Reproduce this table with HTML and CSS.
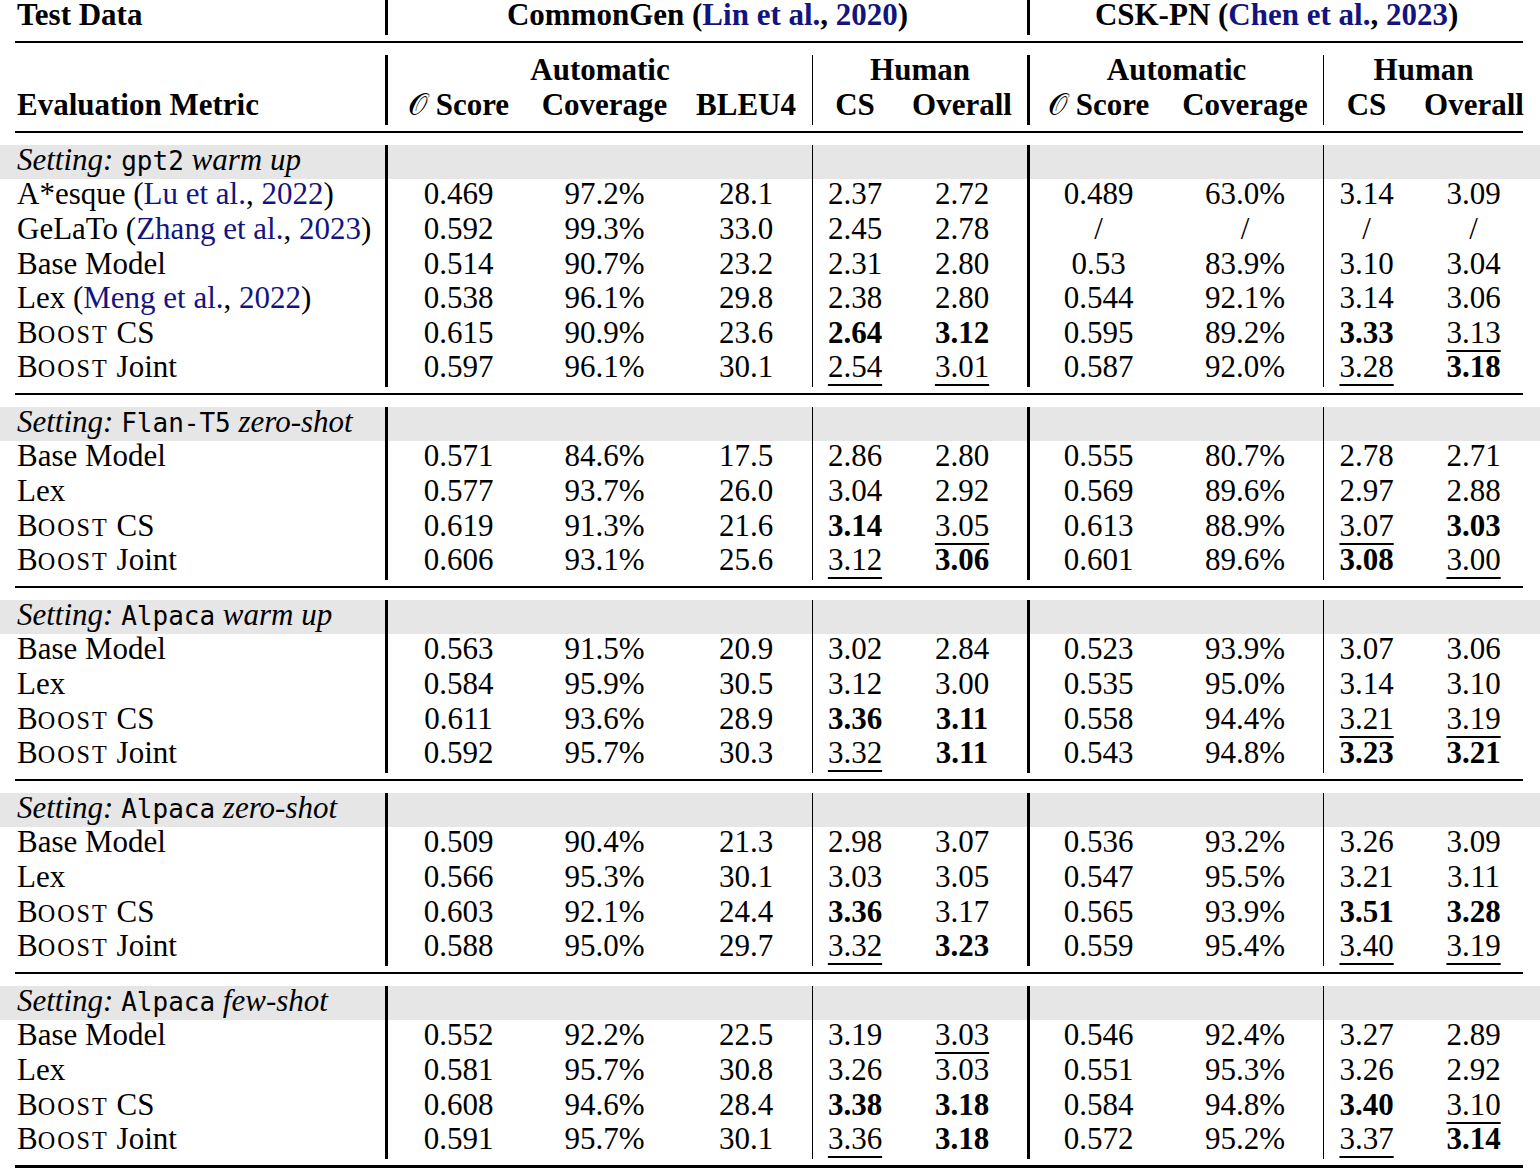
FILE: index.html
```html
<!DOCTYPE html>
<html lang="en">
<head>
<meta charset="utf-8">
<title>Results table</title>
<link rel="stylesheet" href="styles.css">
</head>
<body>
<div class="page">
<table class="results">
  <colgroup>
    <col class="c1"><col class="c2"><col class="c3"><col class="c4"><col class="c5">
    <col class="c6"><col class="c7"><col class="c8"><col class="c9"><col class="c10">
  </colgroup>
  <thead>
    <tr>
      <th class="name">Test Data</th>
      <th class="tk" colspan="5">CommonGen (<span class="cite">Lin et al.</span>, <span class="cite">2020</span>)</th>
      <th class="tk" colspan="4">CSK-PN (<span class="cite">Chen et al.</span>, <span class="cite">2023</span>)</th>
    </tr>
    <tr class="rule"><td colspan="10"><div class="line"></div></td></tr>
    <tr>
      <th class="name"></th>
      <th class="tk" colspan="3">Automatic</th>
      <th class="tn" colspan="2">Human</th>
      <th class="tk" colspan="2">Automatic</th>
      <th class="tn" colspan="2">Human</th>
    </tr>
    <tr>
      <th class="name">Evaluation Metric</th>
      <th class="tk"><span class="cal">𝒪</span> Score</th>
      <th>Coverage</th>
      <th>BLEU4</th>
      <th class="tn">CS</th>
      <th>Overall</th>
      <th class="tk"><span class="cal">𝒪</span> Score</th>
      <th>Coverage</th>
      <th class="tn">CS</th>
      <th class="last">Overall</th>
    </tr>
    <tr class="rule"><td colspan="10"><div class="line"></div></td></tr>
  </thead>
  <tbody>
    <tr class="setting"><td class="name"><i>Setting:</i> <code>gpt2</code> <i>warm up</i></td><td class="tk"></td><td></td><td></td><td class="tn"></td><td></td><td class="tk"></td><td></td><td class="tn"></td><td class="last"></td></tr>
    <tr><td class="name">A*esque (<span class="cite">Lu et al.</span>, <span class="cite">2022</span>)</td><td class="tk">0.469</td><td>97.2%</td><td>28.1</td><td class="tn">2.37</td><td>2.72</td><td class="tk">0.489</td><td>63.0%</td><td class="tn">3.14</td><td class="last">3.09</td></tr>
    <tr><td class="name">GeLaTo (<span class="cite">Zhang et al.</span>, <span class="cite">2023</span>)</td><td class="tk">0.592</td><td>99.3%</td><td>33.0</td><td class="tn">2.45</td><td>2.78</td><td class="tk">/</td><td>/</td><td class="tn">/</td><td class="last">/</td></tr>
    <tr><td class="name">Base Model</td><td class="tk">0.514</td><td>90.7%</td><td>23.2</td><td class="tn">2.31</td><td>2.80</td><td class="tk">0.53</td><td>83.9%</td><td class="tn">3.10</td><td class="last">3.04</td></tr>
    <tr><td class="name">Lex (<span class="cite">Meng et al.</span>, <span class="cite">2022</span>)</td><td class="tk">0.538</td><td>96.1%</td><td>29.8</td><td class="tn">2.38</td><td>2.80</td><td class="tk">0.544</td><td>92.1%</td><td class="tn">3.14</td><td class="last">3.06</td></tr>
    <tr><td class="name">B<span class="sc">oost</span> CS</td><td class="tk">0.615</td><td>90.9%</td><td>23.6</td><td class="tn"><b>2.64</b></td><td><b>3.12</b></td><td class="tk">0.595</td><td>89.2%</td><td class="tn"><b>3.33</b></td><td class="last"><span class="second">3.13</span></td></tr>
    <tr><td class="name">B<span class="sc">oost</span> Joint</td><td class="tk">0.597</td><td>96.1%</td><td>30.1</td><td class="tn"><span class="second">2.54</span></td><td><span class="second">3.01</span></td><td class="tk">0.587</td><td>92.0%</td><td class="tn"><span class="second">3.28</span></td><td class="last"><b>3.18</b></td></tr>
    <tr class="rule"><td colspan="10"><div class="line"></div></td></tr>

    <tr class="setting"><td class="name"><i>Setting:</i> <code>Flan-T5</code> <i>zero-shot</i></td><td class="tk"></td><td></td><td></td><td class="tn"></td><td></td><td class="tk"></td><td></td><td class="tn"></td><td class="last"></td></tr>
    <tr><td class="name">Base Model</td><td class="tk">0.571</td><td>84.6%</td><td>17.5</td><td class="tn">2.86</td><td>2.80</td><td class="tk">0.555</td><td>80.7%</td><td class="tn">2.78</td><td class="last">2.71</td></tr>
    <tr><td class="name">Lex</td><td class="tk">0.577</td><td>93.7%</td><td>26.0</td><td class="tn">3.04</td><td>2.92</td><td class="tk">0.569</td><td>89.6%</td><td class="tn">2.97</td><td class="last">2.88</td></tr>
    <tr><td class="name">B<span class="sc">oost</span> CS</td><td class="tk">0.619</td><td>91.3%</td><td>21.6</td><td class="tn"><b>3.14</b></td><td><span class="second">3.05</span></td><td class="tk">0.613</td><td>88.9%</td><td class="tn"><span class="second">3.07</span></td><td class="last"><b>3.03</b></td></tr>
    <tr><td class="name">B<span class="sc">oost</span> Joint</td><td class="tk">0.606</td><td>93.1%</td><td>25.6</td><td class="tn"><span class="second">3.12</span></td><td><b>3.06</b></td><td class="tk">0.601</td><td>89.6%</td><td class="tn"><b>3.08</b></td><td class="last"><span class="second">3.00</span></td></tr>
    <tr class="rule"><td colspan="10"><div class="line"></div></td></tr>

    <tr class="setting"><td class="name"><i>Setting:</i> <code>Alpaca</code> <i>warm up</i></td><td class="tk"></td><td></td><td></td><td class="tn"></td><td></td><td class="tk"></td><td></td><td class="tn"></td><td class="last"></td></tr>
    <tr><td class="name">Base Model</td><td class="tk">0.563</td><td>91.5%</td><td>20.9</td><td class="tn">3.02</td><td>2.84</td><td class="tk">0.523</td><td>93.9%</td><td class="tn">3.07</td><td class="last">3.06</td></tr>
    <tr><td class="name">Lex</td><td class="tk">0.584</td><td>95.9%</td><td>30.5</td><td class="tn">3.12</td><td>3.00</td><td class="tk">0.535</td><td>95.0%</td><td class="tn">3.14</td><td class="last">3.10</td></tr>
    <tr><td class="name">B<span class="sc">oost</span> CS</td><td class="tk">0.611</td><td>93.6%</td><td>28.9</td><td class="tn"><b>3.36</b></td><td><b>3.11</b></td><td class="tk">0.558</td><td>94.4%</td><td class="tn"><span class="second">3.21</span></td><td class="last"><span class="second">3.19</span></td></tr>
    <tr><td class="name">B<span class="sc">oost</span> Joint</td><td class="tk">0.592</td><td>95.7%</td><td>30.3</td><td class="tn"><span class="second">3.32</span></td><td><b>3.11</b></td><td class="tk">0.543</td><td>94.8%</td><td class="tn"><b>3.23</b></td><td class="last"><b>3.21</b></td></tr>
    <tr class="rule"><td colspan="10"><div class="line"></div></td></tr>

    <tr class="setting"><td class="name"><i>Setting:</i> <code>Alpaca</code> <i>zero-shot</i></td><td class="tk"></td><td></td><td></td><td class="tn"></td><td></td><td class="tk"></td><td></td><td class="tn"></td><td class="last"></td></tr>
    <tr><td class="name">Base Model</td><td class="tk">0.509</td><td>90.4%</td><td>21.3</td><td class="tn">2.98</td><td>3.07</td><td class="tk">0.536</td><td>93.2%</td><td class="tn">3.26</td><td class="last">3.09</td></tr>
    <tr><td class="name">Lex</td><td class="tk">0.566</td><td>95.3%</td><td>30.1</td><td class="tn">3.03</td><td>3.05</td><td class="tk">0.547</td><td>95.5%</td><td class="tn">3.21</td><td class="last">3.11</td></tr>
    <tr><td class="name">B<span class="sc">oost</span> CS</td><td class="tk">0.603</td><td>92.1%</td><td>24.4</td><td class="tn"><b>3.36</b></td><td>3.17</td><td class="tk">0.565</td><td>93.9%</td><td class="tn"><b>3.51</b></td><td class="last"><b>3.28</b></td></tr>
    <tr><td class="name">B<span class="sc">oost</span> Joint</td><td class="tk">0.588</td><td>95.0%</td><td>29.7</td><td class="tn"><span class="second">3.32</span></td><td><b>3.23</b></td><td class="tk">0.559</td><td>95.4%</td><td class="tn"><span class="second">3.40</span></td><td class="last"><span class="second">3.19</span></td></tr>
    <tr class="rule"><td colspan="10"><div class="line"></div></td></tr>

    <tr class="setting"><td class="name"><i>Setting:</i> <code>Alpaca</code> <i>few-shot</i></td><td class="tk"></td><td></td><td></td><td class="tn"></td><td></td><td class="tk"></td><td></td><td class="tn"></td><td class="last"></td></tr>
    <tr><td class="name">Base Model</td><td class="tk">0.552</td><td>92.2%</td><td>22.5</td><td class="tn">3.19</td><td><span class="second">3.03</span></td><td class="tk">0.546</td><td>92.4%</td><td class="tn">3.27</td><td class="last">2.89</td></tr>
    <tr><td class="name">Lex</td><td class="tk">0.581</td><td>95.7%</td><td>30.8</td><td class="tn">3.26</td><td>3.03</td><td class="tk">0.551</td><td>95.3%</td><td class="tn">3.26</td><td class="last">2.92</td></tr>
    <tr><td class="name">B<span class="sc">oost</span> CS</td><td class="tk">0.608</td><td>94.6%</td><td>28.4</td><td class="tn"><b>3.38</b></td><td><b>3.18</b></td><td class="tk">0.584</td><td>94.8%</td><td class="tn"><b>3.40</b></td><td class="last"><span class="second">3.10</span></td></tr>
    <tr><td class="name">B<span class="sc">oost</span> Joint</td><td class="tk">0.591</td><td>95.7%</td><td>30.1</td><td class="tn"><span class="second">3.36</span></td><td><b>3.18</b></td><td class="tk">0.572</td><td>95.2%</td><td class="tn"><span class="second">3.37</span></td><td class="last"><b>3.14</b></td></tr>
    <tr class="rule bottom"><td colspan="10"><div class="line"></div></td></tr>
  </tbody>
</table>
</div>
</body>
</html>
```

FILE: styles.css
```css
* { box-sizing: border-box; }

html, body {
  margin: 0;
  padding: 0;
  background: #ffffff;
}

body {
  font-family: "Liberation Serif", "Times New Roman", serif;
  font-size: 31px;
  color: #000000;
  overflow: hidden;
}

.page {
  padding: 0 17px 0 15px;
}

.results {
  width: 1508px;
  border-collapse: separate;
  border-spacing: 0;
  table-layout: fixed;
}

.c1 { width: 370px; }
.c2 { width: 144px; }
.c3 { width: 151px; }
.c4 { width: 132px; }
.c5 { width: 85px; }
.c6 { width: 130px; }
.c7 { width: 140px; }
.c8 { width: 156px; }
.c9 { width: 86px; }
.c10 { width: 114px; }

.results tr { height: 34.6px; }

.results td,
.results th {
  padding: 0 0 4px 0;
  height: 34.6px;
  line-height: 30.6px;
  text-align: center;
  vertical-align: middle;
  white-space: nowrap;
  font-weight: normal;
}

.results th { font-weight: bold; }

.results .name {
  text-align: left;
  padding-left: 2px;
}

.results .last { padding-left: 15px; }

.results .tk {
  box-shadow: inset 3px 0 0 #000000;
  padding-left: 3px;
}

.results .tn {
  box-shadow: inset 1px 0 0 #000000;
  padding-left: 1px;
}

.results .rule { height: auto; }

.results .rule td {
  height: auto;
  line-height: 0;
  padding: 6.3px 0 11.7px 0;
}

.results .rule .line {
  height: 2px;
  background: #000000;
}

.results .rule.bottom td { padding: 6.3px 0 0 0; }
.results .rule.bottom .line { height: 3.2px; }

.setting td { background: #e6e6e6; }
.setting td:first-child { box-shadow: -15px 0 0 #e6e6e6; }
.setting td:last-child { box-shadow: 17px 0 0 #e6e6e6; }

.cite { color: #14147f; }

.cal {
  font-family: "DejaVu Serif", "DejaVu Sans", serif;
  font-weight: normal;
  line-height: 1;
}

code {
  font-family: "DejaVu Sans Mono", "Liberation Mono", monospace;
  font-size: 26px;
  line-height: 1;
}

.sc {
  text-transform: uppercase;
  font-size: 0.78em;
  letter-spacing: 2px;
  line-height: 1;
}

.second {
  text-decoration-line: underline;
  text-decoration-thickness: 2px;
  text-underline-offset: 7px;
  text-decoration-skip-ink: none;
}
```
